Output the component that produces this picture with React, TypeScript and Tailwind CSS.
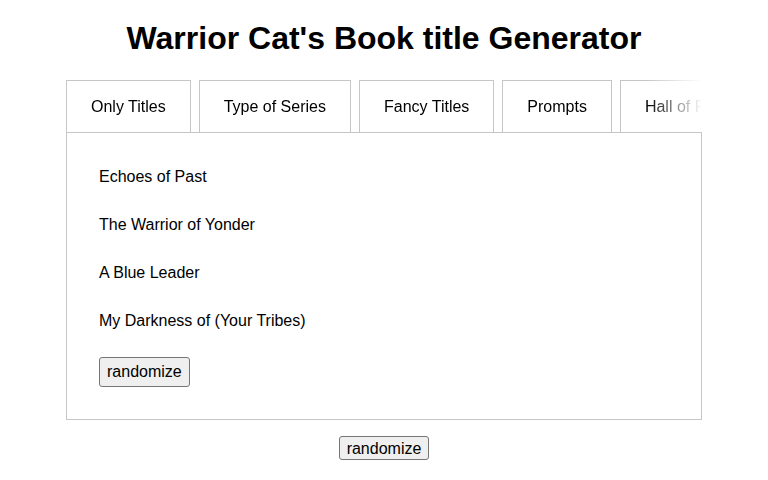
import React, { useState } from 'react';

const tabs = ['Only Titles', 'Type of Series', 'Fancy Titles', 'Prompts', 'Hall of Fame'];

const titles = ['Echoes of Past', 'The Warrior of Yonder', 'A Blue Leader', 'My Darkness of (Your Tribes)'];

export default function App() {
    const [active, setActive] = useState(0);

    return (
        <div className="min-h-[480px] bg-white text-black font-['Liberation_Sans',Arial,sans-serif]">
            <h1 className="pt-[20px] text-center text-[32px] font-bold leading-[37px]">
                Warrior Cat's Book title Generator
            </h1>

            <div className="w-[636px] mx-auto mt-[23px]">
                {/* Tabs */}
                <div className="overflow-hidden [mask-image:linear-gradient(to_right,black_calc(100%-55px),transparent_100%)]">
                    <div className="flex gap-[8px] whitespace-nowrap">
                        {tabs.map((tab, i) => (
                            <button
                                key={tab}
                                onClick={() => setActive(i)}
                                className={`shrink-0 h-[52px] px-[24px] text-[16px] border border-b-0 border-[#c6c6c6] bg-white ${i === active ? 'relative z-10 mb-[-1px] h-[53px]' : ''}`}
                            >
                                {tab}
                            </button>
                        ))}
                    </div>
                </div>

                {/* Panel */}
                <div className="border border-[#c6c6c6] px-[32px] pt-[35px] pb-[32px]">
                    <div className="flex flex-col gap-[30px]">
                        {titles.map(t => (
                            <p key={t} className="text-[16px] leading-[18px]">{t}</p>
                        ))}
                    </div>
                    <button className="mt-[27px] px-[7px] h-[30px] text-[16px] bg-[#efefef] border border-[#767676] rounded-[3px]">
                        randomize
                    </button>
                </div>
            </div>

            <div className="flex justify-center mt-[16px]">
                <button className="px-[7px] h-[24px] text-[16px] bg-[#efefef] border border-[#767676] rounded-[3px]">
                    randomize
                </button>
            </div>
        </div>
    );
}
